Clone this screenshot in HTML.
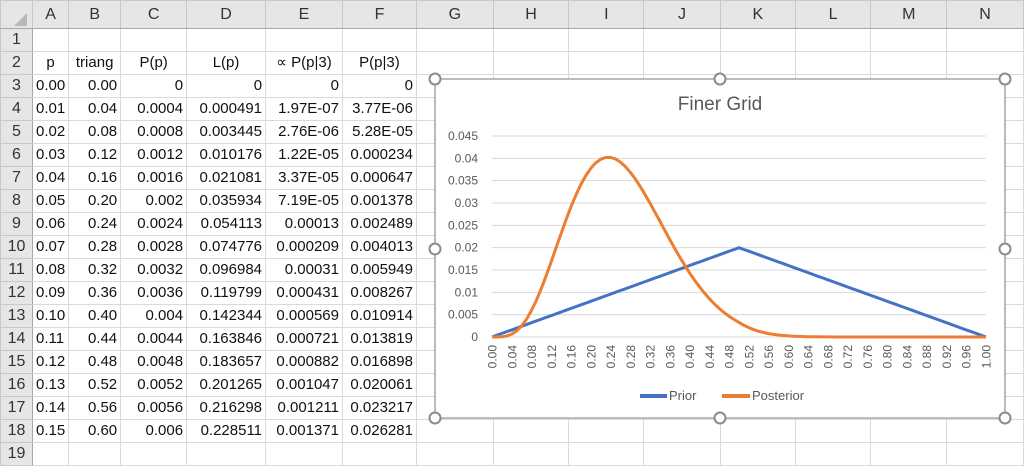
<!DOCTYPE html>
<html><head><meta charset="utf-8"><style>
body{margin:0;width:1024px;height:444px;overflow:hidden;background:#fff;font-family:"Liberation Sans",Arial,sans-serif;position:relative}
table{border-collapse:collapse;table-layout:fixed;position:absolute;left:0;top:0}
td{border:1px solid #dadada;height:23px;padding:0 3px;font-size:15px;line-height:18px;color:#111;white-space:nowrap;overflow:hidden;text-align:right;box-sizing:border-box}
tr{height:23px}
tr.h{height:28px}
tr.h td{height:28px;background:#e6e6e6;color:#333;text-align:center;border-color:#c8c8c8;border-bottom:1px solid #a8a8a8;font-size:16px}
td.r{background:#e6e6e6;color:#333;text-align:center;border-color:#c8c8c8;border-right:1px solid #a8a8a8;padding:0;font-size:16px}
td.a{text-align:left}
tr.t td{border-top:1px solid #666}
tr.t td.c{text-align:center}
svg.c{display:block}
</style></head><body>
<table>
<colgroup><col style="width:32px"><col style="width:35px"><col style="width:52px"><col style="width:66px"><col style="width:79px"><col style="width:77px"><col style="width:74px"><col style="width:77px"><col style="width:76px"><col style="width:75px"><col style="width:77px"><col style="width:75px"><col style="width:76px"><col style="width:76px"><col style="width:77px"></colgroup>
<tr class="h"><td style="padding:0"><svg class="c" width="30" height="24"><polygon points="26,10 26,23 13,23" fill="#b8b8b8"/></svg></td><td>A</td><td>B</td><td>C</td><td>D</td><td>E</td><td>F</td><td>G</td><td>H</td><td>I</td><td>J</td><td>K</td><td>L</td><td>M</td><td>N</td></tr>
<tr><td class="r">1</td><td></td><td></td><td></td><td></td><td></td><td></td><td></td><td></td><td></td><td></td><td></td><td></td><td></td><td></td></tr>
<tr class="t"><td class="r">2</td><td class="c">p</td><td class="c">triang</td><td class="c">P(p)</td><td class="c">L(p)</td><td class="c">∝ P(p|3)</td><td class="c">P(p|3)</td><td style="border-top-color:#dadada"></td><td style="border-top-color:#dadada"></td><td style="border-top-color:#dadada"></td><td style="border-top-color:#dadada"></td><td style="border-top-color:#dadada"></td><td style="border-top-color:#dadada"></td><td style="border-top-color:#dadada"></td><td style="border-top-color:#dadada"></td></tr>
<tr><td class="r">3</td><td class="a">0.00</td><td>0.00</td><td>0</td><td>0</td><td>0</td><td>0</td><td></td><td></td><td></td><td></td><td></td><td></td><td></td><td></td></tr>
<tr><td class="r">4</td><td class="a">0.01</td><td>0.04</td><td>0.0004</td><td>0.000491</td><td>1.97E-07</td><td>3.77E-06</td><td></td><td></td><td></td><td></td><td></td><td></td><td></td><td></td></tr>
<tr><td class="r">5</td><td class="a">0.02</td><td>0.08</td><td>0.0008</td><td>0.003445</td><td>2.76E-06</td><td>5.28E-05</td><td></td><td></td><td></td><td></td><td></td><td></td><td></td><td></td></tr>
<tr><td class="r">6</td><td class="a">0.03</td><td>0.12</td><td>0.0012</td><td>0.010176</td><td>1.22E-05</td><td>0.000234</td><td></td><td></td><td></td><td></td><td></td><td></td><td></td><td></td></tr>
<tr><td class="r">7</td><td class="a">0.04</td><td>0.16</td><td>0.0016</td><td>0.021081</td><td>3.37E-05</td><td>0.000647</td><td></td><td></td><td></td><td></td><td></td><td></td><td></td><td></td></tr>
<tr><td class="r">8</td><td class="a">0.05</td><td>0.20</td><td>0.002</td><td>0.035934</td><td>7.19E-05</td><td>0.001378</td><td></td><td></td><td></td><td></td><td></td><td></td><td></td><td></td></tr>
<tr><td class="r">9</td><td class="a">0.06</td><td>0.24</td><td>0.0024</td><td>0.054113</td><td>0.00013</td><td>0.002489</td><td></td><td></td><td></td><td></td><td></td><td></td><td></td><td></td></tr>
<tr><td class="r">10</td><td class="a">0.07</td><td>0.28</td><td>0.0028</td><td>0.074776</td><td>0.000209</td><td>0.004013</td><td></td><td></td><td></td><td></td><td></td><td></td><td></td><td></td></tr>
<tr><td class="r">11</td><td class="a">0.08</td><td>0.32</td><td>0.0032</td><td>0.096984</td><td>0.00031</td><td>0.005949</td><td></td><td></td><td></td><td></td><td></td><td></td><td></td><td></td></tr>
<tr><td class="r">12</td><td class="a">0.09</td><td>0.36</td><td>0.0036</td><td>0.119799</td><td>0.000431</td><td>0.008267</td><td></td><td></td><td></td><td></td><td></td><td></td><td></td><td></td></tr>
<tr><td class="r">13</td><td class="a">0.10</td><td>0.40</td><td>0.004</td><td>0.142344</td><td>0.000569</td><td>0.010914</td><td></td><td></td><td></td><td></td><td></td><td></td><td></td><td></td></tr>
<tr><td class="r">14</td><td class="a">0.11</td><td>0.44</td><td>0.0044</td><td>0.163846</td><td>0.000721</td><td>0.013819</td><td></td><td></td><td></td><td></td><td></td><td></td><td></td><td></td></tr>
<tr><td class="r">15</td><td class="a">0.12</td><td>0.48</td><td>0.0048</td><td>0.183657</td><td>0.000882</td><td>0.016898</td><td></td><td></td><td></td><td></td><td></td><td></td><td></td><td></td></tr>
<tr><td class="r">16</td><td class="a">0.13</td><td>0.52</td><td>0.0052</td><td>0.201265</td><td>0.001047</td><td>0.020061</td><td></td><td></td><td></td><td></td><td></td><td></td><td></td><td></td></tr>
<tr><td class="r">17</td><td class="a">0.14</td><td>0.56</td><td>0.0056</td><td>0.216298</td><td>0.001211</td><td>0.023217</td><td></td><td></td><td></td><td></td><td></td><td></td><td></td><td></td></tr>
<tr><td class="r">18</td><td class="a">0.15</td><td>0.60</td><td>0.006</td><td>0.228511</td><td>0.001371</td><td>0.026281</td><td></td><td></td><td></td><td></td><td></td><td></td><td></td><td></td></tr>
<tr><td class="r">19</td><td></td><td></td><td></td><td></td><td></td><td></td><td></td><td></td><td></td><td></td><td></td><td></td><td></td><td></td></tr>
</table>
<svg id="ch" width="1024" height="444" style="position:absolute;left:0;top:0" font-family="Liberation Sans, Arial, sans-serif">
<rect x="435" y="79" width="570" height="339" fill="#fff" stroke="#a6a6a6" stroke-width="1.5"/>
<text x="720" y="110" text-anchor="middle" font-size="19" fill="#595959">Finer Grid</text>
<g id="grid" stroke="#d9d9d9" stroke-width="1"></g>
<g id="yl" font-size="12" fill="#595959" text-anchor="end"></g>
<g id="xl" font-size="12" fill="#595959"></g>
<polyline id="pr" fill="none" stroke="#4472c4" stroke-width="3" stroke-linejoin="round"/>
<polyline id="po" fill="none" stroke="#ed7d31" stroke-width="3" stroke-linejoin="round"/>
<line x1="640" y1="396" x2="667" y2="396" stroke="#4472c4" stroke-width="4"/>
<text x="669" y="400" font-size="13" fill="#595959">Prior</text>
<line x1="722" y1="396" x2="750" y2="396" stroke="#ed7d31" stroke-width="4"/>
<text x="752" y="400" font-size="13" fill="#595959">Posterior</text>
<g fill="#fff" stroke="#8c8c8c" stroke-width="2">
<circle cx="435" cy="79" r="5.5"/><circle cx="720" cy="79" r="5.5"/><circle cx="1005" cy="79" r="5.5"/>
<circle cx="435" cy="249" r="5.5"/><circle cx="1005" cy="249" r="5.5"/>
<circle cx="435" cy="418" r="5.5"/><circle cx="720" cy="418" r="5.5"/><circle cx="1005" cy="418" r="5.5"/>
</g>
</svg>
<script>
(function(){
var NS="http://www.w3.org/2000/svg",X0=492,X1=986,Y0=337,S=201/0.045;
function el(t,a,p,txt){var e=document.createElementNS(NS,t);for(var k in a)e.setAttribute(k,a[k]);if(txt!=null)e.textContent=txt;document.getElementById(p).appendChild(e);}
var yl=["0","0.005","0.01","0.015","0.02","0.025","0.03","0.035","0.04","0.045"];
for(var i=0;i<10;i++){var y=Y0-i*0.005*S;el("line",{x1:X0,x2:X1,y1:y,y2:y},"grid");el("text",{x:478,y:y+4},"yl",yl[i]);}
for(var j=0;j<=25;j++){var p=j*0.04,x=X0+p*(X1-X0);el("text",{x:0,y:0,transform:"translate("+(x+4.5)+",345) rotate(-90)","text-anchor":"end"},"xl",p.toFixed(2));}
var tri=[],post=[],sum=0;
for(var k=0;k<=100;k++){var p=k/100,t=(p<=0.5?4*p:4*(1-p))/100;tri.push(t);var v=t*Math.pow(p,3)*Math.pow(1-p,13);post.push(v);sum+=v;}
var a=[],b=[];
for(var k=0;k<=100;k++){var x=X0+k/100*(X1-X0);a.push(x.toFixed(1)+","+(Y0-tri[k]*S).toFixed(1));b.push(x.toFixed(1)+","+(Y0-post[k]/sum*S).toFixed(1));}
document.getElementById("pr").setAttribute("points",a.join(" "));
document.getElementById("po").setAttribute("points",b.join(" "));
})();
</script>
</body></html>
